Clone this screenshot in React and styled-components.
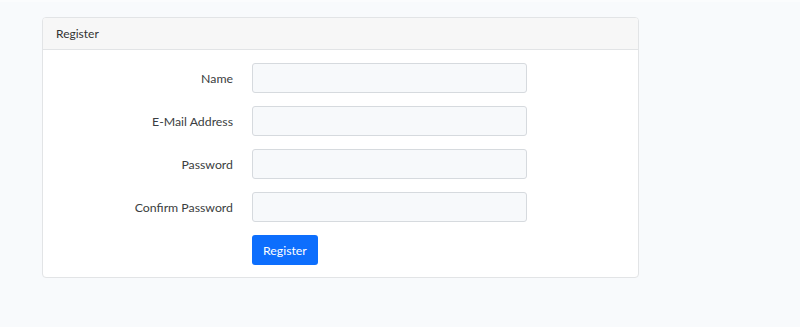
import React from 'react';
import styled, { createGlobalStyle } from 'styled-components';

const GlobalStyle = createGlobalStyle`
  body {
    margin: 0;
    background: #f8fafc;
    font-family: 'Lato', 'Noto Sans', sans-serif;
    color: #212529;
  }
`;

const Page = styled.div`
  padding: 17px 162px 0 42px;
  height: 327px;
  box-sizing: border-box;
  border-top: 2px solid #fbfcfd;
`;

const Card = styled.div`
  width: 597px;
  box-sizing: border-box;
  background: #fff;
  border: 1px solid #e2e4e6;
  border-radius: 4px;
  margin-top: -2px;
`;

const CardHeader = styled.div`
  height: 32px;
  box-sizing: border-box;
  padding: 0 13px;
  display: flex;
  align-items: center;
  background: #f7f7f7;
  border-bottom: 1px solid #e2e4e6;
  border-radius: 3px 3px 0 0;
  font-size: 12px;
  color: #333;
`;

const Form = styled.form`
  display: grid;
  grid-template-columns: 176px 275px;
  column-gap: 19px;
  row-gap: 13px;
  padding: 13px 14px 12px;
  align-items: center;
`;

const Label = styled.label`
  text-align: right;
  font-size: 12.3px;
  color: #3a3d40;
`;

const Input = styled.input`
  height: 30px;
  box-sizing: border-box;
  border: 1px solid #d6dade;
  border-radius: 3px;
  background: #f7f9fb;
  outline: none;
`;

const Button = styled.button`
  grid-column: 2;
  justify-self: start;
  height: 30px;
  padding: 0 11px;
  border: none;
  border-radius: 3px;
  background: #0d6efd;
  color: #fff;
  font-family: inherit;
  font-size: 12.3px;
`;

const fields = ['Name', 'E-Mail Address', 'Password', 'Confirm Password'];

export default function App() {
  return (
    <>
      <GlobalStyle />
      <Page>
        <Card>
          <CardHeader>Register</CardHeader>
          <Form onSubmit={(e) => e.preventDefault()}>
            {fields.map((f) => (
              <React.Fragment key={f}>
                <Label>{f}</Label>
                <Input type={f.includes('Password') ? 'password' : 'text'} />
              </React.Fragment>
            ))}
            <Button type="submit">Register</Button>
          </Form>
        </Card>
      </Page>
    </>
  );
}
